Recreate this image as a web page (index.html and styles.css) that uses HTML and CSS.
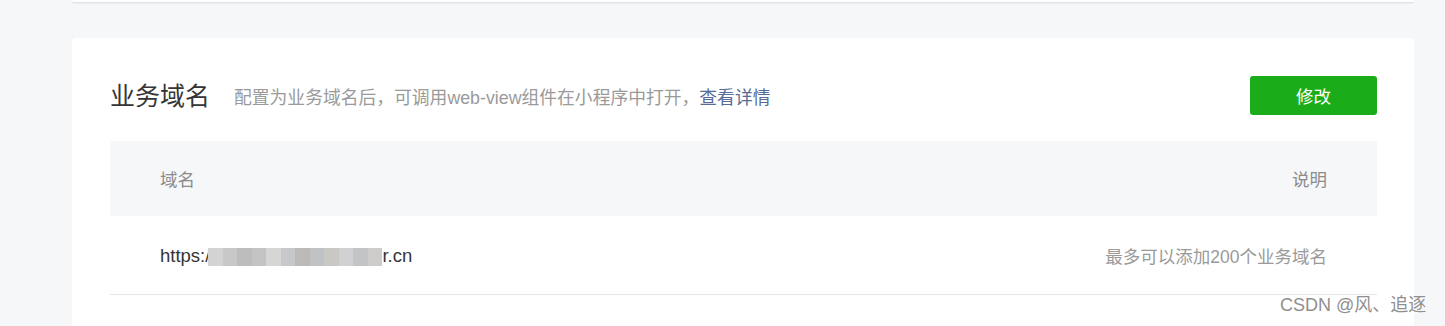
FILE: index.html
```html
<!DOCTYPE html>
<html lang="zh-CN">
<head>
<meta charset="utf-8">
<title>业务域名</title>
<link rel="stylesheet" href="styles.css">
</head>
<body>
<div class="page">
  <div class="card-top"></div>
  <section class="card">
    <div class="head">
      <h2 class="title">业务域名</h2>
      <p class="desc">配置为业务域名后，可调用web-view组件在小程序中打开，<a class="link" href="#">查看详情</a></p>
      <button class="btn">修改</button>
    </div>
    <div class="table">
      <div class="thead">
        <span>域名</span>
        <span>说明</span>
      </div>
      <div class="row">
        <span class="url">https:/<span class="mask"><i></i><i></i><i></i><i></i><i></i><i></i><i></i><i></i><i></i><i></i><i></i><i></i></span>r.cn</span>
        <span class="note">最多可以添加200个业务域名</span>
      </div>
    </div>
  </section>
</div>
<div class="watermark">CSDN @风、追逐</div>
</body>
</html>
```
FILE: styles.css
```css
html, body {
  margin: 0;
  padding: 0;
  background: #f6f7f9;
  font-family: "Liberation Sans", "Noto Sans CJK SC", sans-serif;
  overflow: hidden;
  height: 326px;
}
.page {
  width: 1342px;
  margin-left: 72px;
}
.card-top {
  height: 2px;
  background: #fff;
  border-radius: 0 0 4px 4px;
  box-shadow: 0 1px 2px rgba(0, 0, 0, 0.12);
}
.card {
  margin-top: 36px;
  background: #fff;
  border-radius: 4px;
  padding: 38px 37px 40px 38px;
}
.head {
  display: flex;
  align-items: center;
  height: 39px;
}
.title {
  margin: 0;
  font-weight: normal;
  font-size: 25px;
  line-height: 30px;
  color: #353535;
}
.desc {
  margin: 4px 0 0 24px;
  font-size: 17.8px;
  line-height: 24px;
  color: #9a9a9a;
  flex: 1;
}
.link {
  color: #576b95;
  text-decoration: none;
}
.btn {
  width: 127px;
  height: 39px;
  border: 0;
  border-radius: 3px;
  background: #1aad19;
  color: #fff;
  font-family: inherit;
  font-size: 17.5px;
  padding: 0;
}
.table {
  margin-top: 26px;
}
.thead {
  display: flex;
  justify-content: space-between;
  align-items: center;
  height: 75px;
  padding: 0 50px;
  background: #f6f7f9;
  font-size: 17.5px;
  color: #8c8c8c;
}
.row {
  display: flex;
  justify-content: space-between;
  align-items: center;
  height: 78px;
  padding: 0 50px;
  border-bottom: 1px solid #e7e7eb;
}
.url {
  display: flex;
  align-items: center;
  font-size: 18.5px;
  color: #353535;
  margin-top: 2px;
}
.mask {
  display: flex;
  height: 18px;
  margin: 1px 0 0 -2px;
}
.mask i {
  width: 14.5px;
  height: 18px;
  background: #c9c9c9;
}
.mask i:nth-child(1) { background: #d3d3d3; }
.mask i:nth-child(2) { background: #c8c8c8; }
.mask i:nth-child(3) { background: #bdbdbd; }
.mask i:nth-child(4) { background: #c4c4c4; }
.mask i:nth-child(5) { background: #d6d6d4; }
.mask i:nth-child(6) { background: #c6c8c9; }
.mask i:nth-child(7) { background: #bdb9b6; }
.mask i:nth-child(8) { background: #c0c3c5; }
.mask i:nth-child(9) { background: #c9c8c4; }
.mask i:nth-child(10) { background: #d0d1d0; }
.mask i:nth-child(11) { background: #c3c4c6; }
.mask i:nth-child(12) { background: #cecccb; }
.note {
  font-size: 17.5px;
  color: #9a9a9a;
}
.watermark {
  position: absolute;
  left: 1280px;
  top: 294px;
  font-size: 18px;
  line-height: 22px;
  color: #8f8f8f;
  text-shadow: 0 0 2px #fff, 0 0 1px #fff;
  white-space: nowrap;
}
```
